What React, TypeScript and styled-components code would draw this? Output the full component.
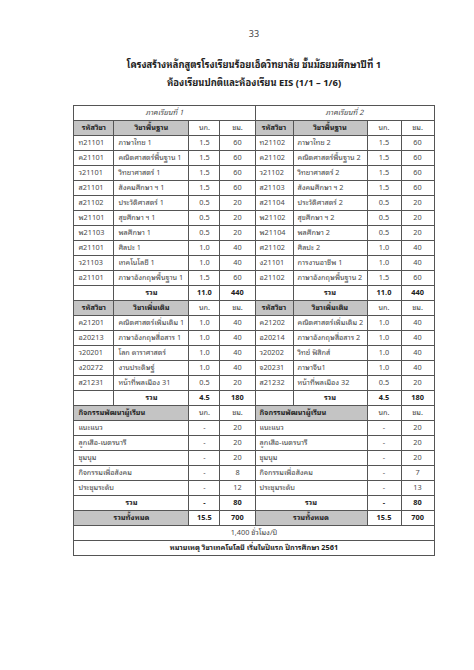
import React from "react";
import styled, { createGlobalStyle } from "styled-components";

const Global = createGlobalStyle`
  html, body { margin: 0; padding: 0; background: #fff; }
  body { font-family: "Noto Sans Thai Looped", Tahoma, "Noto Sans Thai", "Noto Sans", "DejaVu Sans", sans-serif; color: #333; }
`;

const Page = styled.div`
  width: 474px;
  height: 670px;
  box-sizing: border-box;
  padding: 27px 0 0 34px;
  display: flex;
  flex-direction: column;
  align-items: center;
`;

const PageNo = styled.div`
  font-size: 9px;
  line-height: 12px;
  color: #444;
`;

const Title = styled.h1`
  margin: 16px 0 0;
  font-size: 9.4px;
  line-height: 18px;
  font-weight: 700;
  color: #222;
  text-align: center;
`;

const Table = styled.table`
  margin-top: 14px;
  border-collapse: collapse;
  table-layout: fixed;
  width: 360px;
  border: 1.5px solid #333;
  font-size: 7.3px;
`;

type CellProps = { $align?: "left" | "center"; $bold?: boolean; $grey?: boolean; $italic?: boolean };

const Cell = styled.td<CellProps>`
  height: 14px;
  padding: 0 4px;
  border: 1px solid #555;
  text-align: ${(p) => p.$align ?? "center"};
  font-weight: ${(p) => (p.$bold ? 700 : 400)};
  font-style: ${(p) => (p.$italic ? "italic" : "normal")};
  background: ${(p) => (p.$grey ? "#c4c4c4" : "#fff")};
  color: ${(p) => (p.$bold ? "#222" : "#4a4a4a")};
  white-space: nowrap;
  overflow: hidden;
  line-height: 13.8px;
`;

type Subj = [string, string, string, string];

const basic1: Subj[] = [
  ["ท21101", "ภาษาไทย 1", "1.5", "60"],
  ["ค21101", "คณิตศาสตร์พื้นฐาน 1", "1.5", "60"],
  ["ว21101", "วิทยาศาสตร์ 1", "1.5", "60"],
  ["ส21101", "สังคมศึกษา ฯ 1", "1.5", "60"],
  ["ส21102", "ประวัติศาสตร์ 1", "0.5", "20"],
  ["พ21101", "สุขศึกษา ฯ 1", "0.5", "20"],
  ["พ21103", "พลศึกษา 1", "0.5", "20"],
  ["ศ21101", "ศิลปะ 1", "1.0", "40"],
  ["ว21103", "เทคโนโลยี 1", "1.0", "40"],
  ["อ21101", "ภาษาอังกฤษพื้นฐาน 1", "1.5", "60"],
];
const basic2: Subj[] = [
  ["ท21102", "ภาษาไทย 2", "1.5", "60"],
  ["ค21102", "คณิตศาสตร์พื้นฐาน 2", "1.5", "60"],
  ["ว21102", "วิทยาศาสตร์ 2", "1.5", "60"],
  ["ส21103", "สังคมศึกษา ฯ 2", "1.5", "60"],
  ["ส21104", "ประวัติศาสตร์ 2", "0.5", "20"],
  ["พ21102", "สุขศึกษา ฯ 2", "0.5", "20"],
  ["พ21104", "พลศึกษา 2", "0.5", "20"],
  ["ศ21102", "ศิลปะ 2", "1.0", "40"],
  ["ง21101", "การงานอาชีพ 1", "1.0", "40"],
  ["อ21102", "ภาษาอังกฤษพื้นฐาน 2", "1.5", "60"],
];
const extra1: Subj[] = [
  ["ค21201", "คณิตศาสตร์เพิ่มเติม 1", "1.0", "40"],
  ["อ20213", "ภาษาอังกฤษสื่อสาร 1", "1.0", "40"],
  ["ว20201", "โลก ดาราศาสตร์", "1.0", "40"],
  ["ง20272", "งานประดิษฐ์", "1.0", "40"],
  ["ส21231", "หน้าที่พลเมือง 31", "0.5", "20"],
];
const extra2: Subj[] = [
  ["ค21202", "คณิตศาสตร์เพิ่มเติม 2", "1.0", "40"],
  ["อ20214", "ภาษาอังกฤษสื่อสาร 2", "1.0", "40"],
  ["ว20202", "วิทย์ ฟิสิกส์", "1.0", "40"],
  ["จ20231", "ภาษาจีน1", "1.0", "40"],
  ["ส21232", "หน้าที่พลเมือง 32", "0.5", "20"],
];
const acts: [string, string, string][] = [
  ["แนะแนว", "20", "20"],
  ["ลูกเสือ-เนตรนารี", "20", "20"],
  ["ชุมนุม", "20", "20"],
  ["กิจกรรมเพื่อสังคม", "8", "7"],
  ["ประชุมระดับ", "12", "13"],
];

const SubjCells = ({ s }: { s: Subj }) => (
  <>
    <Cell $align="left">{s[0]}</Cell>
    <Cell $align="left">{s[1]}</Cell>
    <Cell>{s[2]}</Cell>
    <Cell>{s[3]}</Cell>
  </>
);

const HeadCells = ({ label }: { label: string }) => (
  <>
    <Cell $grey $bold>รหัสวิชา</Cell>
    <Cell $grey $bold>{label}</Cell>
    <Cell>นก.</Cell>
    <Cell>ชม.</Cell>
  </>
);

const SumCells = ({ c, h }: { c: string; h: string }) => (
  <>
    <Cell />
    <Cell $bold>รวม</Cell>
    <Cell $bold>{c}</Cell>
    <Cell $bold>{h}</Cell>
  </>
);

export default function App() {
  return (
    <>
      <Global />
      <Page>
        <PageNo>33</PageNo>
        <Title>
          โครงสร้างหลักสูตรโรงเรียนร้อยเอ็ดวิทยาลัย ชั้นมัธยมศึกษาปีที่ 1
          <br />
          ห้องเรียนปกติและห้องเรียน EIS (1/1 – 1/6)
        </Title>
        <Table>
          <colgroup>
            <col style={{ width: 40 }} />
            <col style={{ width: 75 }} />
            <col style={{ width: 31 }} />
            <col style={{ width: 35 }} />
            <col style={{ width: 38 }} />
            <col style={{ width: 74 }} />
            <col style={{ width: 34 }} />
            <col style={{ width: 33 }} />
          </colgroup>
          <tbody>
            <tr>
              <Cell colSpan={4} $italic>ภาคเรียนที่ 1</Cell>
              <Cell colSpan={4} $italic>ภาคเรียนที่ 2</Cell>
            </tr>
            <tr>
              <HeadCells label="วิชาพื้นฐาน" />
              <HeadCells label="วิชาพื้นฐาน" />
            </tr>
            {basic1.map((s, i) => (
              <tr key={s[0]}>
                <SubjCells s={s} />
                <SubjCells s={basic2[i]} />
              </tr>
            ))}
            <tr>
              <SumCells c="11.0" h="440" />
              <SumCells c="11.0" h="440" />
            </tr>
            <tr>
              <HeadCells label="วิชาเพิ่มเติม" />
              <HeadCells label="วิชาเพิ่มเติม" />
            </tr>
            {extra1.map((s, i) => (
              <tr key={s[0]}>
                <SubjCells s={s} />
                <SubjCells s={extra2[i]} />
              </tr>
            ))}
            <tr>
              <SumCells c="4.5" h="180" />
              <SumCells c="4.5" h="180" />
            </tr>
            <tr>
              <Cell colSpan={2} $grey $bold $align="left">กิจกรรมพัฒนาผู้เรียน</Cell>
              <Cell>นก.</Cell>
              <Cell>ชม.</Cell>
              <Cell colSpan={2} $grey $bold $align="left">กิจกรรมพัฒนาผู้เรียน</Cell>
              <Cell>นก.</Cell>
              <Cell>ชม.</Cell>
            </tr>
            {acts.map((a) => (
              <tr key={a[0]}>
                <Cell colSpan={2} $align="left">{a[0]}</Cell>
                <Cell>-</Cell>
                <Cell>{a[1]}</Cell>
                <Cell colSpan={2} $align="left">{a[0]}</Cell>
                <Cell>-</Cell>
                <Cell>{a[2]}</Cell>
              </tr>
            ))}
            <tr>
              <Cell colSpan={2} $bold>รวม</Cell>
              <Cell $bold>-</Cell>
              <Cell $bold>80</Cell>
              <Cell colSpan={2} $bold>รวม</Cell>
              <Cell $bold>-</Cell>
              <Cell $bold>80</Cell>
            </tr>
            <tr>
              <Cell colSpan={2} $grey $bold>รวมทั้งหมด</Cell>
              <Cell $bold>15.5</Cell>
              <Cell $bold>700</Cell>
              <Cell colSpan={2} $grey $bold>รวมทั้งหมด</Cell>
              <Cell $bold>15.5</Cell>
              <Cell $bold>700</Cell>
            </tr>
            <tr>
              <Cell colSpan={8}>1,400 ชั่วโมง/ปี</Cell>
            </tr>
            <tr>
              <Cell colSpan={8} $bold>หมายเหตุ วิชาเทคโนโลยี เริ่มในปีแรก ปีการศึกษา 2561</Cell>
            </tr>
          </tbody>
        </Table>
      </Page>
    </>
  );
}
